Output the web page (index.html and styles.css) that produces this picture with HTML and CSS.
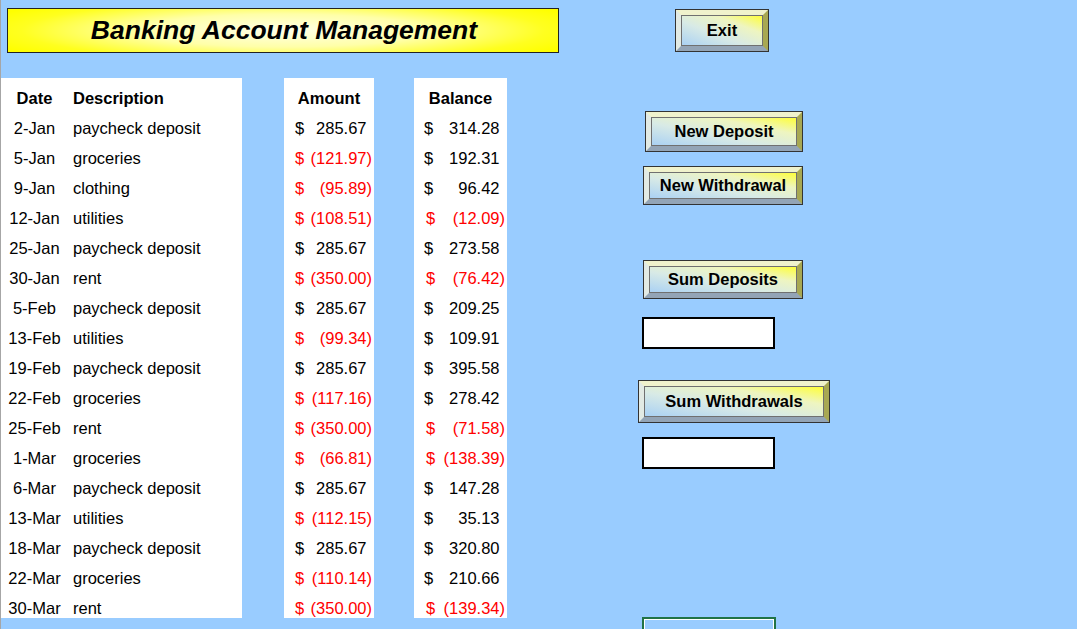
FILE: index.html
```html
<!DOCTYPE html>
<html>
<head>
<meta charset="utf-8">
<title>Banking Account Management</title>
<link rel="stylesheet" href="styles.css">
</head>
<body>
<div class="sheet">
  <div class="left">
    <div class="title">Banking Account Management</div>
    <div class="tables">
      <div class="panel p-desc">
        <div class="row head"><span class="date">Date</span><span class="desc">Description</span></div>
        <div class="row"><span class="date">2-Jan</span><span class="desc">paycheck deposit</span></div>
        <div class="row"><span class="date">5-Jan</span><span class="desc">groceries</span></div>
        <div class="row"><span class="date">9-Jan</span><span class="desc">clothing</span></div>
        <div class="row"><span class="date">12-Jan</span><span class="desc">utilities</span></div>
        <div class="row"><span class="date">25-Jan</span><span class="desc">paycheck deposit</span></div>
        <div class="row"><span class="date">30-Jan</span><span class="desc">rent</span></div>
        <div class="row"><span class="date">5-Feb</span><span class="desc">paycheck deposit</span></div>
        <div class="row"><span class="date">13-Feb</span><span class="desc">utilities</span></div>
        <div class="row"><span class="date">19-Feb</span><span class="desc">paycheck deposit</span></div>
        <div class="row"><span class="date">22-Feb</span><span class="desc">groceries</span></div>
        <div class="row"><span class="date">25-Feb</span><span class="desc">rent</span></div>
        <div class="row"><span class="date">1-Mar</span><span class="desc">groceries</span></div>
        <div class="row"><span class="date">6-Mar</span><span class="desc">paycheck deposit</span></div>
        <div class="row"><span class="date">13-Mar</span><span class="desc">utilities</span></div>
        <div class="row"><span class="date">18-Mar</span><span class="desc">paycheck deposit</span></div>
        <div class="row"><span class="date">22-Mar</span><span class="desc">groceries</span></div>
        <div class="row"><span class="date">30-Mar</span><span class="desc">rent</span></div>
      </div>
      <div class="panel p-amount">
        <div class="row head center">Amount</div>
        <div class="row money"><span>$</span><span>285.67<i class="pad">)</i></span></div>
        <div class="row money neg"><span>$</span><span>(121.97)</span></div>
        <div class="row money neg"><span>$</span><span>(95.89)</span></div>
        <div class="row money neg"><span>$</span><span>(108.51)</span></div>
        <div class="row money"><span>$</span><span>285.67<i class="pad">)</i></span></div>
        <div class="row money neg"><span>$</span><span>(350.00)</span></div>
        <div class="row money"><span>$</span><span>285.67<i class="pad">)</i></span></div>
        <div class="row money neg"><span>$</span><span>(99.34)</span></div>
        <div class="row money"><span>$</span><span>285.67<i class="pad">)</i></span></div>
        <div class="row money neg"><span>$</span><span>(117.16)</span></div>
        <div class="row money neg"><span>$</span><span>(350.00)</span></div>
        <div class="row money neg"><span>$</span><span>(66.81)</span></div>
        <div class="row money"><span>$</span><span>285.67<i class="pad">)</i></span></div>
        <div class="row money neg"><span>$</span><span>(112.15)</span></div>
        <div class="row money"><span>$</span><span>285.67<i class="pad">)</i></span></div>
        <div class="row money neg"><span>$</span><span>(110.14)</span></div>
        <div class="row money neg"><span>$</span><span>(350.00)</span></div>
      </div>
      <div class="panel p-balance">
        <div class="row head center">Balance</div>
        <div class="row money"><span>$</span><span>314.28<i class="pad">)</i></span></div>
        <div class="row money"><span>$</span><span>192.31<i class="pad">)</i></span></div>
        <div class="row money"><span>$</span><span>96.42<i class="pad">)</i></span></div>
        <div class="row money neg"><span class="ind">$</span><span>(12.09)</span></div>
        <div class="row money"><span>$</span><span>273.58<i class="pad">)</i></span></div>
        <div class="row money neg"><span class="ind">$</span><span>(76.42)</span></div>
        <div class="row money"><span>$</span><span>209.25<i class="pad">)</i></span></div>
        <div class="row money"><span>$</span><span>109.91<i class="pad">)</i></span></div>
        <div class="row money"><span>$</span><span>395.58<i class="pad">)</i></span></div>
        <div class="row money"><span>$</span><span>278.42<i class="pad">)</i></span></div>
        <div class="row money neg"><span class="ind">$</span><span>(71.58)</span></div>
        <div class="row money neg"><span class="ind">$</span><span>(138.39)</span></div>
        <div class="row money"><span>$</span><span>147.28<i class="pad">)</i></span></div>
        <div class="row money"><span>$</span><span>35.13<i class="pad">)</i></span></div>
        <div class="row money"><span>$</span><span>320.80<i class="pad">)</i></span></div>
        <div class="row money"><span>$</span><span>210.66<i class="pad">)</i></span></div>
        <div class="row money neg"><span class="ind">$</span><span>(139.34)</span></div>
      </div>
    </div>
  </div>
  <div class="right">
    <div class="btn b-exit"><div class="face">Exit</div></div>
    <div class="btn b-deposit"><div class="face">New Deposit</div></div>
    <div class="btn b-withdraw"><div class="face">New Withdrawal</div></div>
    <div class="btn b-sumdep"><div class="face">Sum Deposits</div></div>
    <div class="field f-1"></div>
    <div class="btn b-sumwd"><div class="face">Sum Withdrawals</div></div>
    <div class="field f-2"></div>
    <div class="selected"></div>
  </div>
</div>
</body>
</html>
```

FILE: styles.css
```css
html, body {
  margin: 0;
  padding: 0;
  height: 100%;
  overflow: hidden;
  background: #99ccff;
  font-family: "Liberation Sans", Arial, sans-serif;
  color: #000;
}

.sheet {
  display: flex;
  align-items: flex-start;
  height: 629px;
  border-left: 1px solid #a6a6a6;
  box-sizing: border-box;
}

.left {
  flex: 0 0 637px;
  display: flex;
  flex-direction: column;
}

.title {
  margin: 8px 0 0 6px;
  width: 552px;
  height: 45px;
  box-sizing: border-box;
  border: 1px solid #222;
  background: radial-gradient(ellipse 58% 85% at 50% 50%, #ffffe8 0%, #ffffa8 45%, #ffff20 82%, #ffff00 100%);
  font-size: 26.5px;
  font-weight: bold;
  font-style: italic;
  display: flex;
  align-items: center;
  justify-content: center;
  padding-left: 2px;
}

.tables {
  display: flex;
  margin-top: 25px;
}

.panel {
  background: #fff;
  height: 540px;
  overflow: hidden;
  padding-top: 5px;
  box-sizing: border-box;
  font-size: 16.5px;
}

.p-desc { width: 241px; }
.p-amount { width: 90px; margin-left: 42px; }
.p-balance { width: 93px; margin-left: 40px; }

.row {
  height: 30px;
  display: flex;
  align-items: center;
  white-space: nowrap;
}

.head {
  font-weight: bold;
}

.center {
  justify-content: center;
}

.date {
  width: 67px;
  text-align: center;
  flex: 0 0 67px;
}

.desc {
  padding-left: 5px;
}

.money {
  justify-content: space-between;
  padding-right: 2px;
}

.p-amount .money { padding-left: 11px; }
.p-balance .money { padding-left: 10px; }
.p-balance .ind { padding-left: 2px; }

.neg {
  color: #ff0000;
}

.pad {
  visibility: hidden;
  font-style: normal;
}

.right {
  display: flex;
  flex-direction: column;
  align-items: flex-start;
}

.btn {
  border: 1px solid #333;
  box-sizing: border-box;
  display: flex;
}

.face {
  flex: 1;
  box-sizing: border-box;
  border-style: solid;
  border-width: 5px;
  border-color: #f0f2cc #a8a852 #93a4b6 #e2eae4;
  box-shadow: inset 0 0 0 1px #707070;
  background: linear-gradient(to top right, #a8d0f4 0%, #d8eae6 40%, #eef5c0 70%, #ffff30 100%);
  font-size: 16.5px;
  font-weight: bold;
  display: flex;
  align-items: center;
  justify-content: center;
  white-space: nowrap;
}

.b-exit { margin: 9px 0 0 37px; width: 94px; height: 43px; }
.b-deposit { margin: 59px 0 0 7px; width: 158px; height: 41px; }
.b-withdraw { margin: 14px 0 0 5px; width: 160px; height: 39px; }
.b-sumdep { margin: 55px 0 0 5px; width: 160px; height: 39px; }
.b-sumwd { margin: 31px 0 0 0; width: 192px; height: 43px; }

.field {
  width: 133px;
  height: 32px;
  box-sizing: border-box;
  border: 2px solid #000;
  background: #fff;
  margin-left: 4px;
}

.f-1 { margin-top: 18px; }
.f-2 { margin-top: 14px; }

.selected {
  margin: 148px 0 0 4px;
  width: 134px;
  height: 40px;
  box-sizing: border-box;
  border: 2px solid #217346;
  box-shadow: inset 0 0 0 1px #fff;
}
```
